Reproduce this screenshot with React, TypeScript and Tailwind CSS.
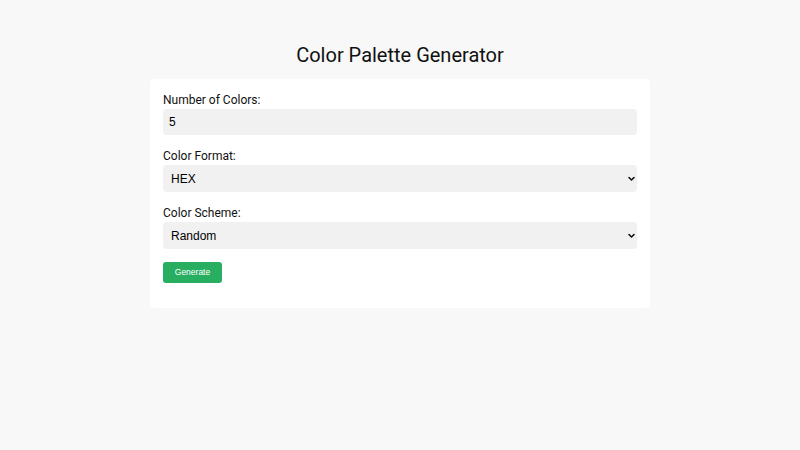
import { useState } from "react";

function Chevron() {
  return (
    <svg
      className="absolute right-[2px] top-1/2 -translate-y-1/2 pointer-events-none"
      width="7"
      height="5"
      viewBox="0 0 7 5"
      fill="none"
    >
      <polyline
        points="1,1 3.5,3.5 6,1"
        stroke="#111"
        strokeWidth="1.6"
        strokeLinecap="round"
        strokeLinejoin="round"
      />
    </svg>
  );
}

function App() {
  const [count, setCount] = useState("5");
  const [format, setFormat] = useState("HEX");
  const [scheme, setScheme] = useState("Random");

  return (
    <div className="min-h-screen bg-[#f8f8f8] pt-[43px] font-['Roboto',sans-serif] text-[#111]">
      <h1 className="text-center text-[20px] leading-[24px] mb-[12px]">
        Color Palette Generator
      </h1>

      <div className="w-[500px] mx-auto bg-white rounded-[4px] p-[13px]">
        {/* Number of colors */}
        <div className="mb-[13px]">
          <label className="block text-[12px] leading-[17px]">
            Number of Colors:
          </label>
          <input
            type="number"
            value={count}
            onChange={(e) => setCount(e.target.value)}
            className="block w-full h-[26px] px-[6px] bg-[#f1f1f1] rounded-[4px] text-[12px] font-['Liberation_Sans',sans-serif] text-black outline-none [appearance:textfield] [&::-webkit-inner-spin-button]:appearance-none"
          />
        </div>

        {/* Format */}
        <div className="mb-[13px]">
          <label className="block text-[12px] leading-[17px]">
            Color Format:
          </label>
          <div className="relative">
            <select
              value={format}
              onChange={(e) => setFormat(e.target.value)}
              className="block w-full h-[27px] pl-[8px] pr-[16px] appearance-none bg-[#f1f1f1] rounded-[4px] text-[12px] font-['Liberation_Sans',sans-serif] text-black outline-none"
            >
              <option>HEX</option>
              <option>RGB</option>
              <option>HSL</option>
            </select>
            <Chevron />
          </div>
        </div>

        {/* Scheme */}
        <div className="mb-[13px]">
          <label className="block text-[12px] leading-[17px]">
            Color Scheme:
          </label>
          <div className="relative">
            <select
              value={scheme}
              onChange={(e) => setScheme(e.target.value)}
              className="block w-full h-[27px] pl-[8px] pr-[16px] appearance-none bg-[#f1f1f1] rounded-[4px] text-[12px] font-['Liberation_Sans',sans-serif] text-black outline-none"
            >
              <option>Random</option>
              <option>Monochromatic</option>
              <option>Analogous</option>
              <option>Complementary</option>
            </select>
            <Chevron />
          </div>
        </div>

        <button className="block w-[59px] h-[21px] mb-[12px] rounded-[3px] bg-[#27ae60] text-white text-[8.5px] font-['Liberation_Sans',sans-serif]">
          Generate
        </button>
      </div>
    </div>
  );
}

export default App;
